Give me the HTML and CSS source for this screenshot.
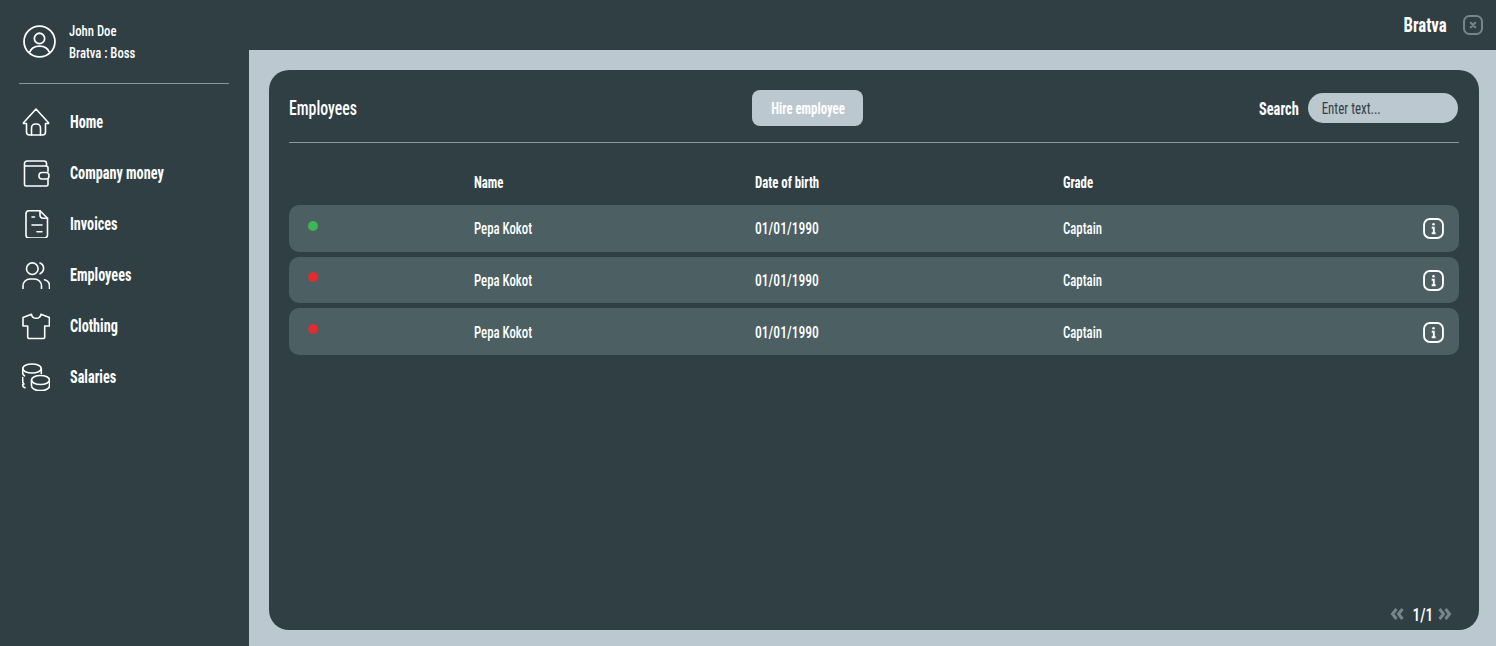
FILE: index.html
```html
<!DOCTYPE html>
<html lang="en">
<head>
<meta charset="utf-8">
<title>Employees</title>
<link rel="stylesheet" href="styles.css">
</head>
<body>
<div class="app">
  <aside class="sidebar">
    <div class="user">
      <svg class="avatar" viewBox="0 0 32 32"><circle cx="16" cy="16" r="15"/><circle cx="16" cy="13" r="5"/><path d="M6.500 26.500c1.500-4.500 5-6 9.500-6s8 1.500 9.500 6"/></svg>
      <div class="user-text"><div>John Doe</div><div>Bratva : Boss</div></div>
    </div>
    <nav class="nav">
      <a class="nav-item"><svg class="nav-icon" viewBox="0 0 28 28"><path d="M1.500 14.800 14 1l12.500 13.800c.3.4 0 .7-.4.7H23.500V24a3 3 0 0 1-3 3h-13a3 3 0 0 1-3-3v-8.500H1.900c-.4 0-.7-.3-.4-.7z"/><path d="M9.500 27v-7a4 4 0 0 1 4-4h1a4 4 0 0 1 4 4v7"/></svg><span class="label">Home</span></a>
      <a class="nav-item"><svg class="nav-icon" viewBox="0 0 28 28"><path d="M26 12.500V9a2 2 0 0 0-2-2H3"/><path d="M24.500 7V4.500A2.500 2.500 0 0 0 22 2H5A2.500 2.500 0 0 0 2.500 4.500v21A1.500 1.500 0 0 0 4 27h20.500a1.500 1.500 0 0 0 1.500-1.500V20"/><rect x="17" y="13.500" width="10" height="6.500" rx="3"/></svg><span class="label">Company money</span></a>
      <a class="nav-item"><svg class="nav-icon" viewBox="0 0 28 28"><path d="M7 .8h11l7.500 7.500v16.700a3 3 0 0 1-3 3H7a3 3 0 0 1-3-3V3.800a3 3 0 0 1 3-3z"/><path d="M18 .8v4.500a3 3 0 0 0 3 3h4.500"/><path d="M10 7h2.500M10 15h10M15 21.700h5"/></svg><span class="label">Invoices</span></a>
      <a class="nav-item"><svg class="nav-icon" viewBox="0 0 28 28"><circle cx="10.300" cy="7.700" r="5.800"/><path d="M18 2a5.800 5.800 0 0 1 0 10.700"/><path d="M1 27.500V25a7 7 0 0 1 7-7h4.500a7 7 0 0 1 7 7v2.500"/><path d="M22.500 18.700a6.500 6.500 0 0 1 5 6.300v2.500"/></svg><span class="label">Employees</span></a>
      <a class="nav-item"><svg class="nav-icon" viewBox="0 0 28 28"><path d="M9.500 2.300 1 5.500v8.500h4.700v11a1.500 1.500 0 0 0 1.500 1.500h14a1.500 1.500 0 0 0 1.500-1.500V14h4.700V5.500l-8.500-3.200c-.5 2.600-2.200 4-4.700 4s-4.200-1.400-4.700-4z"/></svg><span class="label">Clothing</span></a>
      <a class="nav-item"><svg class="nav-icon" viewBox="0 0 28 28"><ellipse cx="10" cy="5.500" rx="9.300" ry="4.500"/><path d="M.7 5.500v4.300c0 1.200.7 2.200 1.800 3M.7 14.500v4c0 1 .5 1.800 1.300 2.500M.7 21.500v.7c0 1 .9 2 2.300 2.500M19.300 5.500v5"/><ellipse cx="18.500" cy="17" rx="9" ry="4.500"/><path d="M9.500 17v6c0 2.500 4 4.500 9 4.500s9-2 9-4.500v-6"/></svg><span class="label">Salaries</span></a>
    </nav>
  </aside>
  <div class="main">
    <header class="topbar">
      <span class="org">Bratva</span>
      <svg class="close" viewBox="0 0 20 20"><rect x="1" y="1" width="18" height="18" rx="5.500"/><path class="x" d="M7.800 7.800l4.400 4.400M12.200 7.800l-4.400 4.400"/></svg>
    </header>
    <div class="content">
      <section class="card">
        <div class="card-head">
          <h1 class="title">Employees</h1>
          <button class="hire"><span class="hire-text">Hire employee</span></button>
          <label class="search"><span class="search-label">Search</span><span class="pill"><input class="search-input" type="text" placeholder="Enter text..."></span></label>
        </div>
        <div class="table-head">
          <span></span><span class="cell">Name</span><span class="cell">Date of birth</span><span class="cell">Grade</span><span></span>
        </div>
        <div class="rows">
          <div class="row"><i class="dot on"></i><span class="cell">Pepa Kokot</span><span class="cell date">01/01/1990</span><span class="cell">Captain</span><svg class="info" viewBox="0 0 20 20"><rect x="1" y="1" width="18" height="18" rx="5.500"/><circle class="fill" cx="10" cy="6" r="1.200"/><path d="M8.300 9.300H10.300V14.500M8.300 14.500H12"/></svg></div>
          <div class="row"><i class="dot off"></i><span class="cell">Pepa Kokot</span><span class="cell date">01/01/1990</span><span class="cell">Captain</span><svg class="info" viewBox="0 0 20 20"><rect x="1" y="1" width="18" height="18" rx="5.500"/><circle class="fill" cx="10" cy="6" r="1.200"/><path d="M8.300 9.300H10.300V14.500M8.300 14.500H12"/></svg></div>
          <div class="row"><i class="dot off"></i><span class="cell">Pepa Kokot</span><span class="cell date">01/01/1990</span><span class="cell">Captain</span><svg class="info" viewBox="0 0 20 20"><rect x="1" y="1" width="18" height="18" rx="5.500"/><circle class="fill" cx="10" cy="6" r="1.200"/><path d="M8.300 9.300H10.300V14.500M8.300 14.500H12"/></svg></div>
        </div>
        <div class="pager">
          <svg class="chev" viewBox="0 0 14 12"><path d="M6.500 1 2.500 6l4 5M12.500 1 8.500 6l4 5"/></svg>
          <span class="pages">1/1</span>
          <svg class="chev" viewBox="0 0 14 12"><path d="M1.500 1l4 5-4 5M7.500 1l4 5-4 5"/></svg>
        </div>
      </section>
    </div>
  </div>
</div>
</body>
</html>
```

FILE: styles.css
```css
* { box-sizing: border-box; }
html, body { margin: 0; height: 100%; }
body {
  font-family: "Roboto Condensed", "Liberation Sans", sans-serif;
  color: #fff;
  background: #2f3f44;
  overflow: hidden;
}
.app { display: flex; height: 646px; }
.sidebar { width: 249px; flex: none; background: #2f3f44; padding: 0 20px 0 19px; }
.user {
  height: 84px;
  display: flex;
  align-items: center;
  gap: 13px;
  padding: 0 0 0 4px;
  border-bottom: 1px solid #8a989d;
}
.avatar { width: 33px; height: 33px; flex: none; margin-top: -1px; fill: none; stroke: #fff; stroke-width: 1.700; }
.user-text { font-size: 15.500px; font-weight: 500; line-height: 22px; transform: scaleX(.82); transform-origin: left; white-space: nowrap; }
.nav { display: flex; flex-direction: column; padding-top: 12px; }
.nav-item { height: 51px; display: flex; align-items: center; gap: 20px; padding-left: 3px; }
.label { font-size: 18px; font-weight: 700; transform: scaleX(.79); transform-origin: left; white-space: nowrap; }
.nav-icon { width: 28px; height: 28px; flex: none; fill: none; stroke: #fff; stroke-width: 1.600; stroke-linejoin: round; stroke-linecap: round; }
.main { flex: 1; display: flex; flex-direction: column; min-width: 0; }
.topbar { height: 50px; flex: none; display: flex; align-items: center; justify-content: flex-end; gap: 16px; padding: 0 13px 0 0; }
.org { font-size: 20.500px; font-weight: 700; transform: scaleX(.82); transform-origin: right; }
.close { width: 20px; height: 20px; fill: none; stroke: #78868b; stroke-width: 2; }
.close .x { stroke-linecap: round; stroke-width: 2.200; }
.content { flex: 1; background: #bcc8d0; padding: 20px 17px 16px 20px; min-height: 0; }
.card { height: 100%; background: #2f3f44; border-radius: 20px; padding: 20px 20px 0; display: flex; flex-direction: column; }
.card-head {
  height: 53px;
  flex: none;
  display: grid;
  grid-template-columns: 463px 111px 1fr;
  align-items: start;
  border-bottom: 1px solid #8a989d;
}
.title { margin: 5px 0 0; font-size: 20px; line-height: 27px; font-weight: 500; transform: scaleX(.79); transform-origin: left; white-space: nowrap; }
.hire {
  width: 111px; height: 36px;
  border: 0; border-radius: 8px;
  padding: 0;
  background: #bcc8d0; color: #fff;
  font: 700 16px "Roboto Condensed", sans-serif;
  white-space: nowrap;
}
.hire-text { display: inline-block; transform: scaleX(.8); }
.search { display: flex; justify-content: flex-end; align-items: center; gap: 9px; padding: 3px 1px 0 0; }
.search-label { font-size: 18px; font-weight: 700; transform: scaleX(.8); transform-origin: right; }
.pill { width: 150px; height: 30px; flex: none; display: block; border-radius: 15px; background: #bcc8d0; overflow: hidden; }
.search-input {
  display: block;
  width: 180px; height: 30px;
  border: 0;
  background: none;
  padding: 0 0 0 18px;
  font: 17px "Roboto Condensed", sans-serif;
  color: #2f3f44;
  transform: scaleX(.76);
  transform-origin: left;
}
.search-input::placeholder { color: #2f3f44; opacity: 1; }
.table-head, .row { display: grid; grid-template-columns: 185px 281px 308px 1fr 24px; align-items: center; }
.table-head { height: 62px; flex: none; padding-right: 13px; font-size: 16px; font-weight: 700; padding-top: 17px; }
.cell { justify-self: start; transform: scaleX(.8); transform-origin: left; white-space: nowrap; }
.rows { display: flex; flex-direction: column; gap: 5px; }
.row { height: 46.670px; flex: none; background: #4c5f63; border-radius: 10px; padding: 1px 15px 0 0; font-size: 16px; font-weight: 500; }
.row .cell { transform: scaleX(.8); }
.row .date { transform: scaleX(.85); }
.dot { width: 10px; height: 10px; border-radius: 50%; margin: -6px 0 0 19px; }
.on { background: #3ab854; }
.off { background: #e02d2f; }
.info { width: 21px; height: 21px; justify-self: end; fill: none; stroke: #fff; stroke-width: 1.800; }
.info .fill { fill: #fff; stroke: none; }
.pager { margin-top: auto; height: 32px; display: flex; align-items: center; justify-content: flex-end; gap: 7px; padding: 0 7px 0 0; }
.pages { width: 20px; text-align: center; white-space: nowrap; font-size: 18px; font-weight: 500; transform: scaleX(.85); }
.chev { width: 14px; height: 12px; fill: none; stroke: #78868b; stroke-width: 3; }
```
